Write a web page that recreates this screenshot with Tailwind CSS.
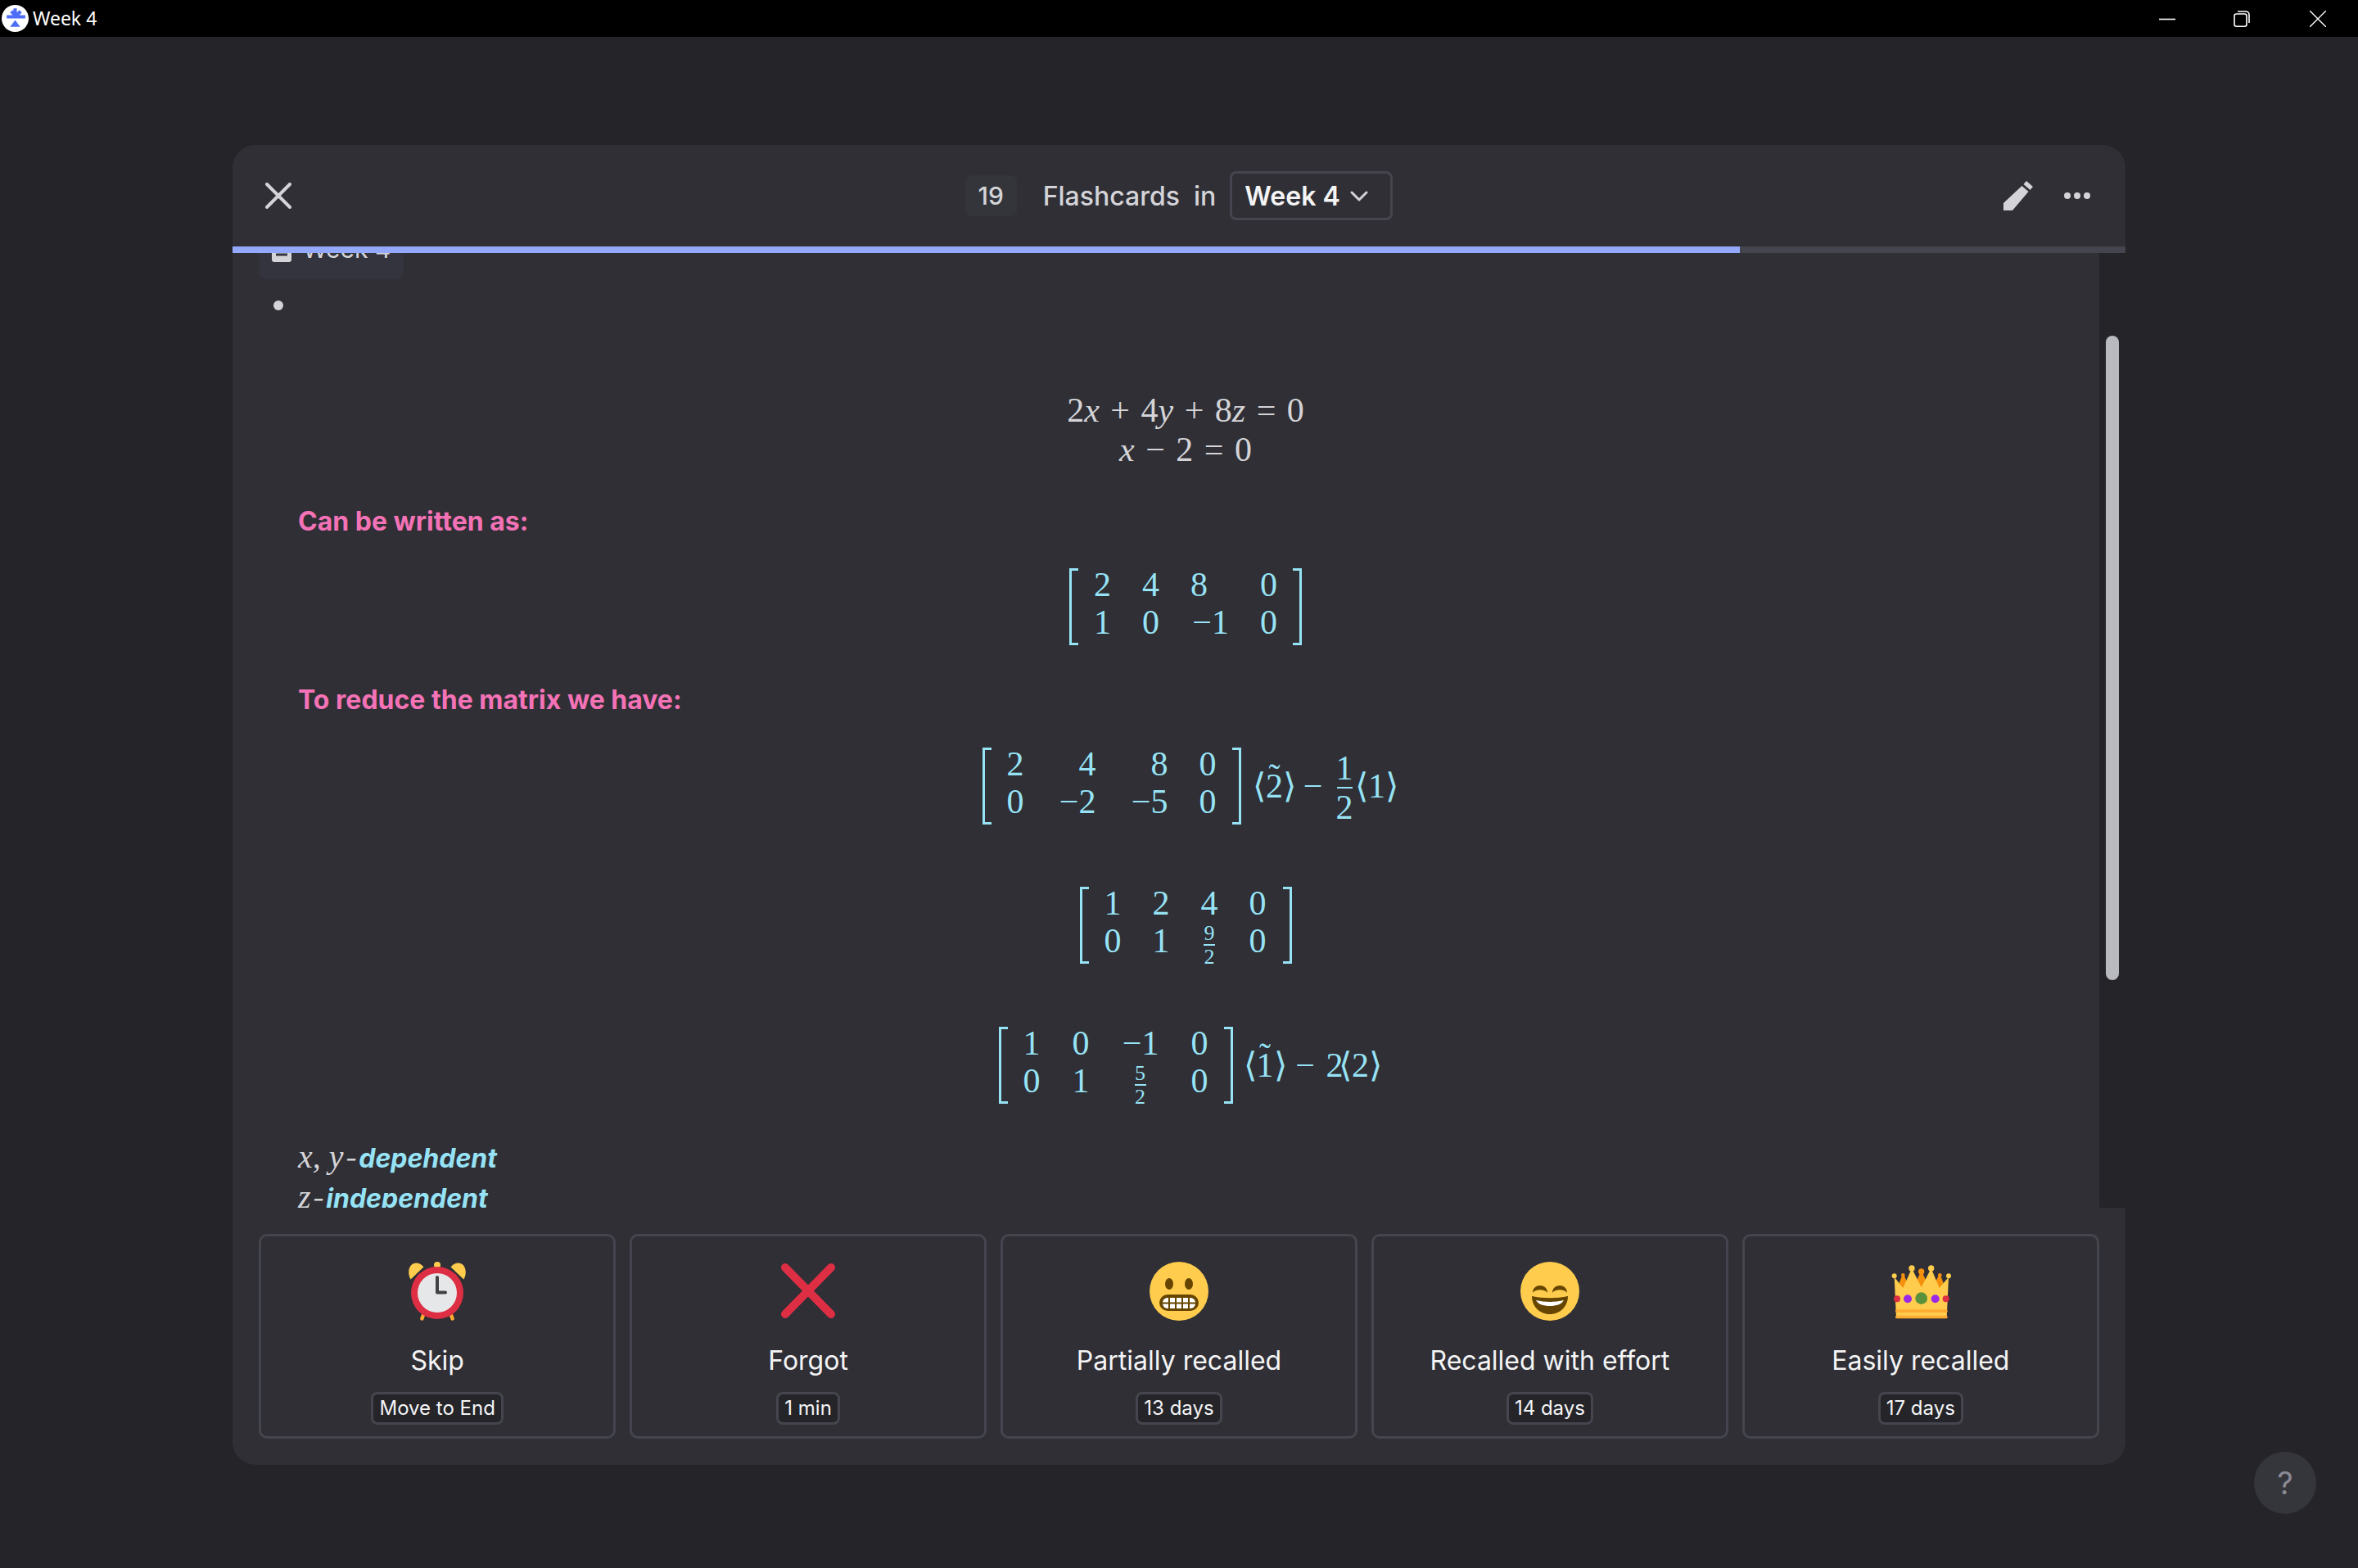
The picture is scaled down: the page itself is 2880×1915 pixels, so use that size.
<!DOCTYPE html>
<html lang="en">
<head>
    <meta charset="UTF-8">
    <title>Week 4</title>
    <script src="https://cdn.jsdelivr.net/npm/@tailwindcss/browser@4"></script>
</head>
<body class="bg-[#242429] h-[1915px] w-[2880px] overflow-hidden font-['Inter',sans-serif] relative">

    <!-- Window title bar -->
    <div class="h-[45px] bg-black flex items-center text-white">
        <svg class="w-[33px] h-[33px] ml-[2px]" viewBox="0 0 32 32">
            <circle cx="16" cy="16" r="16" fill="#fff"/>
            <path d="M14 4h4v5l3-3 3 3-3 3h7v4H6v-4h7L10 9l3-3 1 1zM16 18l6 8H10z" fill="#4f6ef7"/>
        </svg>
        <span class="ml-[5px] text-[23px] font-['Noto_Sans',sans-serif]">Week 4</span>
        <div class="ml-auto flex items-center">
            <svg class="w-[20px] h-[20px] mr-[71px]" viewBox="0 0 20 20"><path d="M0 10.5h20" stroke="#fff" stroke-width="1.6"/></svg>
            <svg class="w-[20px] h-[20px] mr-[73px]" viewBox="0 0 20 20" fill="none" stroke="#fff" stroke-width="1.6"><rect x="1" y="4" width="15" height="15.2" rx="2.5"/><path d="M5 1h10a4 4 0 0 1 4 4v10"/></svg>
            <svg class="w-[20px] h-[20px] mr-[39px]" viewBox="0 0 20 20" fill="none" stroke="#fff" stroke-width="1.4"><path d="M0 0l20 20M20 0L0 20"/></svg>
        </div>
    </div>

    <!-- Flashcard modal -->
    <div class="ml-[284px] mt-[132px] w-[2312px] h-[1612px] bg-[#2f2f35] rounded-[28px] overflow-hidden flex flex-col">
        <!-- Header -->
        <div class="h-[124px] shrink-0 grid grid-cols-[1fr_auto_1fr] items-center px-[40px] text-[#d4d4d8]">
            <svg class="w-[32px] h-[32px]" viewBox="0 0 32 32" fill="none" stroke="#d4d4d8" stroke-width="4" stroke-linecap="round"><path d="M2 2l28 28M30 2L2 30"/></svg>
            <div class="flex items-center">
                <span class="w-[63px] h-[50px] rounded-[8px] bg-[#33353b] flex items-center justify-center text-[30px] font-medium">19</span>
                <span class="ml-[32px] mt-[2px] text-[32px] font-medium">Flashcards</span>
                <span class="ml-[17px] mt-[2px] text-[32px] font-medium">in</span>
                <div class="ml-[17px] w-[199px] h-[60px] border-[3px] border-[#45454f] rounded-[8px] flex items-center pl-[15px] text-[32px] font-semibold text-[#f4f4f5]">
                    <span class="mt-[2px]">Week 4</span>
                    <svg class="w-[22px] h-[13px] ml-[12px]" viewBox="0 0 22 13" fill="none" stroke="#d4d4d8" stroke-width="3" stroke-linecap="round" stroke-linejoin="round"><path d="M2 2l9 9 9-9"/></svg>
                </div>
            </div>
            <div class="flex items-center justify-end pr-[2px]">
                <svg class="w-[36px] h-[36px]" viewBox="0 0 36 36" fill="#d4d4d8"><path d="M28 0l8 7-3.500 4-8-7zM22.500 6l8 7L11 36H0v-9z"/></svg>
                <svg class="w-[34px] h-[10px] ml-[37px]" viewBox="0 0 34 10" fill="#d4d4d8"><circle cx="5" cy="5" r="4"/><circle cx="17" cy="5" r="4"/><circle cx="29" cy="5" r="4"/></svg>
            </div>
        </div>

        <!-- Progress -->
        <div class="h-[8px] shrink-0 bg-[#45454f]">
            <div class="h-full w-[1841px] bg-[#94a9fb]"></div>
        </div>

        <!-- Scrolling card body -->
        <div class="h-[1166px] shrink-0 flex bg-[#242429]">
            <div class="w-[2280px] bg-[#2f2f35] overflow-hidden px-[32px] flex flex-col text-[#d4d4d8]">
                <div class="-mt-[40px] w-[177px] h-[72px] shrink-0 rounded-[10px] bg-[#33343d] flex items-start pt-[15px] pl-[16px] text-[30px] leading-[40px]">
                    <svg class="w-[24px] h-[32px] mt-[4px]" viewBox="0 0 24 32"><rect width="24" height="32" rx="3" fill="#d4d4d8"/><path d="M5 23h14" stroke="#33343d" stroke-width="3"/></svg>
                    <span class="ml-[14px]">Week 4</span>
                </div>
                <span class="mt-[26px] ml-[18px] w-[12px] h-[12px] rounded-full bg-[#d4d4d8] shrink-0"></span>

                <div class="pl-[48px] flex flex-col shrink-0">
                    <!-- Equations -->
                    <div class="mt-[98px] text-center text-[42px] leading-[48px] font-['Liberation_Serif',serif] [word-spacing:3px]">
                        <div>2<i>x</i> + 4<i>y</i> + 8<i>z</i> = 0</div>
                        <div><i>x</i> − 2 = 0</div>
                    </div>

                    <h3 class="mt-[44px] h-[40px] leading-[40px] text-[32px] font-bold text-[#f472b6]">Can be written as:</h3>

                    <!-- Matrix 1 -->
                    <div class="mt-[37px] h-[94px] flex justify-center items-center text-[42px] leading-[46px] text-[#97e3f6] font-['Liberation_Serif',serif]">
                        <span class="w-[11px] h-[94px] border-l-[3px] border-y-[3px] border-[#97e3f6]"></span>
                        <div class="grid grid-cols-[21px_21px_47px_21px] gap-x-[38px] pl-[19px] pr-[19px] pb-[8px]">
                            <span class="text-center">2</span><span class="text-center">4</span><span>8</span><span class="text-center">0</span>
                            <span class="text-center">1</span><span class="text-center">0</span><span class="text-right">−1</span><span class="text-center">0</span>
                        </div>
                        <span class="w-[11px] h-[94px] border-r-[3px] border-y-[3px] border-[#97e3f6]"></span>
                    </div>

                    <h3 class="mt-[47px] h-[40px] leading-[40px] text-[32px] font-bold text-[#f472b6]">To reduce the matrix we have:</h3>

                    <!-- Matrix 2 -->
                    <div class="mt-[38px] h-[94px] ml-[6px] flex justify-center items-center text-[42px] leading-[46px] text-[#97e3f6] font-['Liberation_Serif',serif]">
                        <span class="w-[11px] h-[94px] border-l-[3px] border-y-[3px] border-[#97e3f6]"></span>
                        <div class="grid grid-cols-[21px_50px_50px_21px] gap-x-[38px] pl-[19px] pr-[19px] pb-[8px]">
                            <span class="text-center">2</span><span class="text-right">4</span><span class="text-right">8</span><span class="text-center">0</span>
                            <span class="text-center">0</span><span class="text-right">−2</span><span class="text-right">−5</span><span class="text-center">0</span>
                        </div>
                        <span class="w-[11px] h-[94px] border-r-[3px] border-y-[3px] border-[#97e3f6]"></span>
                        <span class="ml-[20px] w-[42px] flex justify-center whitespace-nowrap">⟨<span class="relative">2<span class="absolute inset-x-0 -top-[12px] text-center">˜</span></span>⟩</span>
                        <span class="ml-[13px] w-[26px] text-center">−</span>
                        <span class="ml-[16px] w-[19px] flex flex-col items-center">
                            <span class="h-[43px] leading-[40px]">1</span>
                            <span class="w-full h-[2px] bg-[#97e3f6]"></span>
                            <span class="h-[40px] leading-[46px]">2</span>
                        </span>
                        <span class="ml-[9px] w-[42px] flex justify-center whitespace-nowrap">⟨1⟩</span>
                    </div>

                    <!-- Matrix 3 -->
                    <div class="mt-[76px] h-[94px] flex justify-center items-center text-[42px] leading-[46px] text-[#97e3f6] font-['Liberation_Serif',serif]">
                        <span class="w-[11px] h-[94px] border-l-[3px] border-y-[3px] border-[#97e3f6]"></span>
                        <div class="grid grid-cols-[21px_21px_21px_21px] gap-x-[38px] pl-[19px] pr-[20px] pb-[8px]">
                            <span class="text-center">1</span><span class="text-center">2</span><span class="text-center">4</span><span class="text-center">0</span>
                            <span class="text-center">0</span><span class="text-center">1</span>
                            <span class="h-[46px] flex flex-col items-center text-[26px]">
                                <span class="h-[27px] leading-[27px]">9</span>
                                <span class="w-[14px] h-[1.500px] shrink-0 bg-[#97e3f6]"></span>
                                <span class="h-[26px] leading-[28px]">2</span>
                            </span>
                            <span class="text-center">0</span>
                        </div>
                        <span class="w-[11px] h-[94px] border-r-[3px] border-y-[3px] border-[#97e3f6]"></span>
                    </div>

                    <!-- Matrix 4 -->
                    <div class="mt-[77px] h-[94px] ml-[6px] flex justify-center items-center text-[42px] leading-[46px] text-[#97e3f6] font-['Liberation_Serif',serif]">
                        <span class="w-[11px] h-[94px] border-l-[3px] border-y-[3px] border-[#97e3f6]"></span>
                        <div class="grid grid-cols-[21px_21px_46px_21px] gap-x-[39px] pl-[19px] pr-[19px] pb-[8px]">
                            <span class="text-center">1</span><span class="text-center">0</span><span class="text-right">−1</span><span class="text-center">0</span>
                            <span class="text-center">0</span><span class="text-center">1</span>
                            <span class="h-[46px] flex flex-col items-center text-[26px]">
                                <span class="h-[27px] leading-[27px]">5</span>
                                <span class="w-[14px] h-[1.500px] shrink-0 bg-[#97e3f6]"></span>
                                <span class="h-[26px] leading-[28px]">2</span>
                            </span>
                            <span class="text-center">0</span>
                        </div>
                        <span class="w-[11px] h-[94px] border-r-[3px] border-y-[3px] border-[#97e3f6]"></span>
                        <span class="ml-[19px] w-[41px] flex justify-center whitespace-nowrap">⟨<span class="relative">1<span class="absolute inset-x-0 -top-[12px] text-center">˜</span></span>⟩</span>
                        <span class="ml-[16px] w-[25px] text-center">−</span>
                        <span class="ml-[13px] w-[21px] text-center">2</span>
                        <span class="w-[42px] flex justify-center whitespace-nowrap">⟨2⟩</span>
                    </div>

                    <!-- Notes -->
                    <div class="mt-[41px] text-[32px] leading-[47px] font-bold italic text-[#97e3f6]">
                        <div><span class="font-['Liberation_Serif',serif] font-normal text-[#d4d4d8] text-[40px]">x, y</span><span class="ml-[2px] mr-[2px] text-[#d4d4d8] font-normal">-</span>depehdent</div>
                        <div><span class="font-['Liberation_Serif',serif] font-normal text-[#d4d4d8] text-[40px]">z</span><span class="ml-[2px] mr-[2px] text-[#d4d4d8] font-normal">-</span>independent</div>
                    </div>
                </div>
            </div>
            <div class="relative w-[32px]">
                <span class="absolute left-[8px] top-[101px] w-[16px] h-[787px] rounded-full bg-[#b9b9c0]"></span>
            </div>
        </div>

        <!-- Answer buttons -->
        <div class="flex-1 grid grid-cols-5 gap-x-[16.500px] p-[32px] text-[#f4f4f5]">
            <div class="border-[3px] border-[#45454f] rounded-[10px] flex flex-col items-center pt-[31px]">
                <svg class="w-[72px] h-[72px]" viewBox="0 0 36 36">
                    <path d="M1.800 10.700C-.5 7 .5.700 5.200.700 7 .700 8.800 1.700 9.700 3.200zM34.200 10.700C36.500 7 35.500.700 30.800.700 29 .700 27.200 1.700 26.300 3.200z" fill="#ffcc4d"/>
                    <circle cx="18" cy="2" r="2" fill="#ffcc4d"/>
                    <path d="M9.500 32.500l-.8 2.200M26.500 32.500l.8 2.200" stroke="#ffac33" stroke-width="2.200" stroke-linecap="round"/>
                    <circle cx="18" cy="19" r="16" fill="#dd2e44"/>
                    <circle cx="18" cy="19" r="12" fill="#e6e7e8"/>
                    <path d="M18 9.500v9.200h5" fill="none" stroke="#414042" stroke-width="2" stroke-linecap="round" stroke-linejoin="round"/>
                </svg>
                <span class="mt-[27px] text-[32px] leading-[44px]">Skip</span>
                <span class="mt-[16px] h-[40px] px-[7px] rounded-[8px] border-[3px] border-[#45454f] bg-[#242429] flex items-center text-[24px]">Move to End</span>
            </div>
            <div class="border-[3px] border-[#45454f] rounded-[10px] flex flex-col items-center pt-[31px]">
                <svg class="w-[72px] h-[72px]" viewBox="0 0 72 72" fill="none" stroke="#dd2e44" stroke-width="10" stroke-linecap="round"><path d="M8 7l56 57M64 7L8 64"/></svg>
                <span class="mt-[27px] text-[32px] leading-[44px]">Forgot</span>
                <span class="mt-[16px] h-[40px] px-[7px] rounded-[8px] border-[3px] border-[#45454f] bg-[#242429] flex items-center text-[24px]">1 min</span>
            </div>
            <div class="border-[3px] border-[#45454f] rounded-[10px] flex flex-col items-center pt-[31px]">
                <svg class="w-[72px] h-[72px]" viewBox="0 0 72 72">
                    <circle cx="36" cy="36" r="36" fill="#ffcc4d"/>
                    <ellipse cx="24" cy="27" rx="5" ry="7" fill="#664500"/><ellipse cx="48" cy="27" rx="5" ry="7" fill="#664500"/>
                    <rect x="12" y="40" width="48" height="20" rx="10" fill="#664500"/>
                    <rect x="16" y="44" width="40" height="13" rx="6" fill="#fff"/>
                    <path d="M24 44v13M32 44v13M40 44v13M48 44v13M16 50.500h40" stroke="#664500" stroke-width="2"/>
                </svg>
                <span class="mt-[27px] text-[32px] leading-[44px]">Partially recalled</span>
                <span class="mt-[16px] h-[40px] px-[7px] rounded-[8px] border-[3px] border-[#45454f] bg-[#242429] flex items-center text-[24px]">13 days</span>
            </div>
            <div class="border-[3px] border-[#45454f] rounded-[10px] flex flex-col items-center pt-[31px]">
                <svg class="w-[72px] h-[72px]" viewBox="0 0 72 72">
                    <circle cx="36" cy="36" r="36" fill="#ffcc4d"/>
                    <path d="M15 38c0-12 18-12 18 0-3-5-15-5-18 0zM39 38c0-12 18-12 18 0-3-5-15-5-18 0z" fill="#664500"/>
                    <path d="M14 42c14 3 30 3 44 0 0 12-9 22-22 22S14 54 14 42z" fill="#664500"/>
                    <path d="M19 47c11 2.500 23 2.500 34 0-3 5-9 7-17 7s-14-2-17-7z" fill="#fff"/>
                </svg>
                <span class="mt-[27px] text-[32px] leading-[44px]">Recalled with effort</span>
                <span class="mt-[16px] h-[40px] px-[7px] rounded-[8px] border-[3px] border-[#45454f] bg-[#242429] flex items-center text-[24px]">14 days</span>
            </div>
            <div class="border-[3px] border-[#45454f] rounded-[10px] flex flex-col items-center pt-[31px]">
                <svg class="w-[110px] h-[72px]" viewBox="0 29 330 216" preserveAspectRatio="xMidYMid meet">
                    <path d="M100 70L84 112l16 16 18-18zM167 60l-18 40 18 28 18-28zM234 70l16 42-16 16-18-18z" fill="#f4900c"/>
                    <circle cx="100" cy="78" r="7" fill="#f4900c"/><circle cx="167" cy="65" r="11" fill="#f4900c"/><circle cx="235" cy="78" r="7" fill="#f4900c"/>
                    <path d="M68 85l32 40 32-72 35 69 36-69 30 72 34-40-7 150H75z" fill="#ffcc4d"/>
                    <circle cx="68" cy="81" r="9" fill="#ffcc4d"/><circle cx="132" cy="53" r="11" fill="#ffcc4d"/><circle cx="203" cy="53" r="11" fill="#ffcc4d"/><circle cx="267" cy="81" r="9" fill="#ffcc4d"/>
                    <circle cx="78" cy="165" r="12" fill="#dd2e44"/><circle cx="117" cy="165" r="15" fill="#9a28e6"/><circle cx="167" cy="163" r="22" fill="#5c913b"/><circle cx="218" cy="165" r="15" fill="#9a28e6"/><circle cx="257" cy="165" r="12" fill="#dd2e44"/>
                    <rect x="72" y="204" width="191" height="11" rx="5" fill="#ffac33"/><rect x="72" y="226" width="191" height="11" rx="5" fill="#ffac33"/>
                </svg>
                <span class="mt-[27px] text-[32px] leading-[44px]">Easily recalled</span>
                <span class="mt-[16px] h-[40px] px-[7px] rounded-[8px] border-[3px] border-[#45454f] bg-[#242429] flex items-center text-[24px]">17 days</span>
            </div>
        </div>
    </div>

    <!-- Help button -->
    <div class="absolute left-[2753px] top-[1773px] w-[76px] h-[76px] rounded-full bg-[#35353c] flex items-center justify-center text-[38px] text-[#8a8a94]">?</div>
</body>
</html>
